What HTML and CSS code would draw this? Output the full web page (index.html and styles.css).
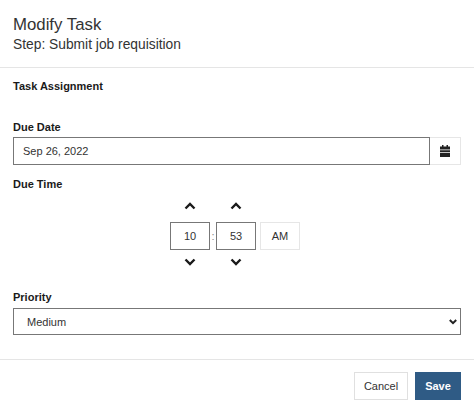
FILE: index.html
```html
<!DOCTYPE html>
<html lang="en">
<head>
    <meta charset="UTF-8">
    <meta name="viewport" content="width=device-width, initial-scale=1.0">
    <title>Modify Task</title>
    <link rel="stylesheet" href="styles.css">
</head>
<body>
    <div class="modal">
        <div class="modal-header">
            <h1>Modify Task</h1>
            <p>Step: Submit job requisition</p>
        </div>

        <div class="modal-body">
            <h2>Task Assignment</h2>

            <label class="field-label date-label" for="dueDate">Due Date</label>
            <div class="date-row">
                <input type="text" id="dueDate" class="date-input" value="Sep 26, 2022">
                <button class="calendar-btn" aria-label="Open calendar">
                    <svg width="10" height="12" viewBox="0 0 10 12">
                        <path fill="#222" d="M2 0h1.500v1.500h3V0H8v1.500h2v3H0v-3h2zM0 5.300h10v2H0zM0 8.100h10V12H0z"/>
                    </svg>
                </button>
            </div>

            <label class="field-label time-label">Due Time</label>
            <div class="time-picker">
                <div class="time-col">
                    <svg class="chevron chevron-up" width="12" height="8" viewBox="0 0 12 8"><path d="M1.500 6.500 6 2l4.500 4.500"/></svg>
                    <input type="text" class="time-input" value="10">
                    <svg class="chevron chevron-down" width="12" height="8" viewBox="0 0 12 8"><path d="M1.500 1.500 6 6l4.500-4.500"/></svg>
                </div>
                <span class="time-sep">:</span>
                <div class="time-col">
                    <svg class="chevron chevron-up" width="12" height="8" viewBox="0 0 12 8"><path d="M1.500 6.500 6 2l4.500 4.500"/></svg>
                    <input type="text" class="time-input" value="53">
                    <svg class="chevron chevron-down" width="12" height="8" viewBox="0 0 12 8"><path d="M1.500 1.500 6 6l4.500-4.500"/></svg>
                </div>
                <button class="ampm-btn">AM</button>
            </div>

            <label class="field-label priority-label" for="priority">Priority</label>
            <div class="select-wrap">
                <select id="priority" class="priority-select">
                    <option>Medium</option>
                </select>
                <svg class="select-arrow" width="8" height="6" viewBox="0 0 8 6"><path d="M.8 1 4 4.200 7.200 1"/></svg>
            </div>
        </div>

        <div class="modal-footer">
            <button class="btn btn-cancel">Cancel</button>
            <button class="btn btn-save">Save</button>
        </div>
    </div>
</body>
</html>
```

FILE: styles.css
```css
* {
    box-sizing: border-box;
    font-family: "Liberation Sans", Arial, sans-serif;
}

body {
    margin: 0;
    background: #fff;
    color: #333;
}

.modal {
    width: 474px;
    height: 412px;
    overflow: hidden;
}

.modal-header {
    height: 68px;
    padding: 15px 13px 0;
    border-bottom: 1px solid #e5e5e5;
}

h1 {
    margin: 0;
    font-size: 16.800px;
    line-height: 20px;
    font-weight: 400;
    color: #333;
}

.modal-header p {
    margin: 1px 0 0;
    font-size: 13.800px;
    line-height: 17px;
    color: #333;
}

.modal-body {
    height: 292px;
    padding: 11px 13px 0;
    border-bottom: 1px solid #e5e5e5;
}

h2 {
    margin: 0;
    font-size: 11px;
    line-height: 15px;
    font-weight: 700;
    color: #1a1a1a;
}

.field-label {
    display: block;
    font-size: 11px;
    line-height: 15px;
    font-weight: 700;
    color: #1a1a1a;
}

.date-label {
    margin-top: 26px;
    margin-bottom: 2px;
}

.date-row {
    display: flex;
    height: 28px;
}

.date-input {
    flex: 1;
    min-width: 0;
    padding: 0 9px;
    border: 1px solid #777;
    border-radius: 0;
    font-size: 11px;
    color: #333;
    background: #fff;
    outline: none;
}

.calendar-btn {
    width: 31px;
    padding: 0;
    display: flex;
    align-items: center;
    justify-content: center;
    background: #fff;
    border: 1px solid #e6e6e6;
    border-left: none;
}

.time-label {
    margin-top: 12px;
}

.time-picker {
    display: flex;
    justify-content: center;
    align-items: center;
    margin-top: 10px;
    padding-right: 4px;
}

.time-col {
    display: flex;
    flex-direction: column;
    align-items: center;
}

.chevron {
    display: block;
    fill: none;
    stroke: #1a1a1a;
    stroke-width: 2.400;
}

.chevron-up {
    margin-bottom: 12px;
}

.chevron-down {
    margin-top: 8px;
}

.time-input {
    width: 40px;
    height: 28px;
    padding: 0;
    text-align: center;
    border: 1px solid #777;
    border-radius: 0;
    font-size: 11px;
    color: #333;
    outline: none;
}

.time-sep {
    width: 6px;
    margin-top: 4px;
    text-align: center;
    font-size: 11px;
    color: #888;
}

.ampm-btn {
    width: 40px;
    height: 28px;
    margin-top: 4px;
    margin-left: 4px;
    padding: 0;
    background: #fff;
    border: 1px solid #e6e6e6;
    font-size: 11px;
    color: #333;
}

.priority-label {
    margin-top: 24px;
    margin-bottom: 3px;
}

.select-wrap {
    position: relative;
}

.priority-select {
    display: block;
    width: 100%;
    height: 27px;
    padding: 0 13px;
    appearance: none;
    background: #fff;
    border: 1px solid #777;
    border-radius: 0;
    font-size: 11px;
    color: #333;
    outline: none;
}

.select-arrow {
    position: absolute;
    right: 4px;
    top: 11px;
    fill: none;
    stroke: #222;
    stroke-width: 2;
    pointer-events: none;
}

.modal-footer {
    display: flex;
    justify-content: flex-end;
    gap: 7px;
    padding: 12px 13px 0;
}

.btn {
    height: 28px;
    padding: 0;
    border-radius: 0;
    font-size: 11px;
}

.btn-cancel {
    width: 54px;
    background: #fff;
    border: 1px solid #e0e0e0;
    color: #333;
}

.btn-save {
    width: 46px;
    background: #2f5b85;
    border: 1px solid #2f5b85;
    color: #fff;
    font-weight: 700;
}
```
